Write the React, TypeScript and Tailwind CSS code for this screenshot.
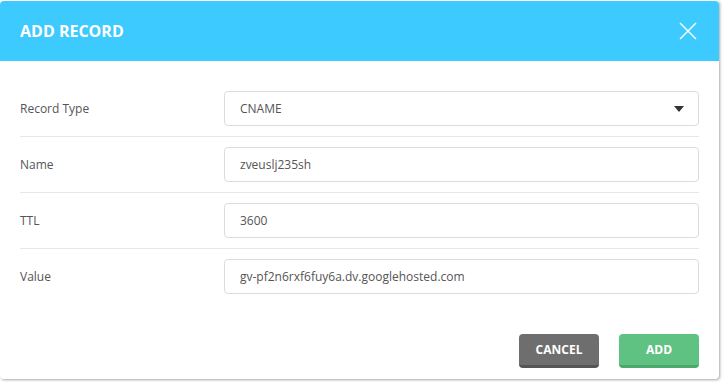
import React from "react";

const rows = [
  { label: "Record Type", value: "CNAME", select: true },
  { label: "Name", value: "zveuslj235sh" },
  { label: "TTL", value: "3600" },
  { label: "Value", value: "gv-pf2n6rxf6fuy6a.dv.googlehosted.com" },
];

export default function App() {
  return (
    <div className="w-[724px] h-[382px] bg-white overflow-hidden" style={{ fontFamily: '"Open Sans", sans-serif' }}>
      <div className="w-[719px] h-[379px] bg-white rounded-[4px] shadow-[1px_1px_3px_rgba(0,0,0,0.35)] flex flex-col">
        <div className="mt-px h-[60px] bg-[#3dcaff] rounded-t-[4px] flex items-center justify-between pl-5 pr-[22px]">
          <h1 className="text-white font-bold text-[16px] tracking-[0px] uppercase">Add Record</h1>
          <svg width="18" height="18" viewBox="0 0 18 18" className="block">
            <path d="M1 1L17 17M17 1L1 17" stroke="white" strokeWidth="1.4" fill="none" />
          </svg>
        </div>
        <div className="px-5 pt-5 flex flex-col">
          {rows.map((r, i) => (
            <div
              key={r.label}
              className={`flex items-center py-[10px] ${i < rows.length - 1 ? "border-b border-[#e8e8e8]" : ""}`}
            >
              <div className="w-[204px] text-[12px] text-[#555]">{r.label}</div>
              <div className="flex-1 h-[35px] border border-[#dcdcdc] rounded-[4px] flex items-center justify-between pl-[15px] pr-[14px] text-[12px] text-[#555]">
                <span>{r.value}</span>
                {r.select && (
                  <svg width="10" height="6" viewBox="0 0 10 6" className="block">
                    <path d="M0 0H10L5 6Z" fill="#333" />
                  </svg>
                )}
              </div>
            </div>
          ))}
          <div className="flex justify-end gap-5 mt-[30px]">
            <button className="w-20 h-[34px] rounded-[4px] bg-[#6e6e6e] border-b-[3px] border-[#555] text-white font-bold text-[12px] uppercase">
              Cancel
            </button>
            <button className="w-20 h-[34px] rounded-[4px] bg-[#5fc182] border-b-[3px] border-[#4aa96b] text-white font-bold text-[12px] uppercase">
              Add
            </button>
          </div>
        </div>
      </div>
    </div>
  );
}
